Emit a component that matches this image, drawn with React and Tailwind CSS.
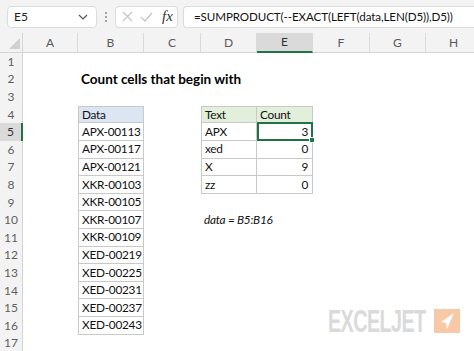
import React from "react";

const COLS = ["A", "B", "C", "D", "E", "F", "G", "H"];

const DATA = [
  "APX-00113",
  "APX-00117",
  "APX-00121",
  "XKR-00103",
  "XKR-00105",
  "XKR-00107",
  "XKR-00109",
  "XED-00219",
  "XED-00225",
  "XED-00231",
  "XED-00237",
  "XED-00243",
];

const COUNTS = [
  ["APX", 3],
  ["xed", 0],
  ["X", 9],
  ["zz", 0],
];

function FormulaBar() {
  return (
    <div className="h-[33px] bg-[#f3f3f3] flex items-center pl-[7px] pr-0">
      <div className="w-[90px] h-[22px] bg-white border border-[#dcdcdc] rounded-[4px] flex items-center justify-between px-[6px] text-[12px] text-[#222]">
        <span>E5</span>
        <svg width="10" height="6" viewBox="0 0 10 6" className="mr-[2px]">
          <path d="M1 1 L5 5 L9 1" fill="none" stroke="#555" strokeWidth="1.2" />
        </svg>
      </div>
      <div className="w-[18px] flex flex-col items-center gap-[2px]">
        <span className="w-[2px] h-[2px] bg-[#888] rounded-full" />
        <span className="w-[2px] h-[2px] bg-[#888] rounded-full" />
        <span className="w-[2px] h-[2px] bg-[#888] rounded-full" />
      </div>
      <div className="w-[63px] h-[22px] bg-white border border-[#dcdcdc] rounded-[4px] flex items-center gap-[7px] pl-[6px]">
        <svg width="11" height="11" viewBox="0 0 11 11">
          <path d="M1 1 L10 10 M10 1 L1 10" stroke="#c4c4c4" strokeWidth="1.2" />
        </svg>
        <svg width="13" height="10" viewBox="0 0 13 10">
          <path d="M1 5 L5 9 L12 1" fill="none" stroke="#c4c4c4" strokeWidth="1.2" />
        </svg>
        <span className="font-['Liberation_Serif'] italic text-[15px] leading-none text-[#333] ml-[2px]">
          fx
        </span>
      </div>
      <div className="ml-[5px] flex-1 h-[22px] bg-white border border-r-0 border-[#dcdcdc] rounded-l-[4px] flex items-center pl-[10px] text-[11.6px] tracking-[-0.1px] text-[#111] whitespace-nowrap overflow-hidden">
        =SUMPRODUCT(--EXACT(LEFT(data,LEN(D5)),D5))
      </div>
    </div>
  );
}

function Cell({ className = "", children }) {
  return <div className={`flex items-center overflow-visible whitespace-nowrap ${className}`}>{children}</div>;
}

export default function App() {
  const cells = [];

  // header row
  cells.push(
    <div key="corner" className="relative bg-[#f3f3f3] border-r border-b border-[#d4d4d4]">
      <svg width="11" height="11" viewBox="0 0 11 11" className="absolute right-[2px] bottom-[3px]">
        <path d="M11 0 L11 11 L0 11 Z" fill="#d0d0d0" />
      </svg>
    </div>
  );
  COLS.forEach((c) => {
    const sel = c === "E";
    cells.push(
      <div
        key={"h" + c}
        className={`flex items-center justify-center text-[12px] border-r border-[#dadada] ${
          sel ? "bg-[#dadada] text-[#333] border-b-2 border-b-[#217346]" : "bg-[#f3f3f3] text-[#5a5a5a] border-b border-b-[#d4d4d4]"
        }`}
      >
        {c}
      </div>
    );
  });

  for (let r = 1; r <= 17; r++) {
    const sel = r === 5;
    cells.push(
      <div
        key={"r" + r}
        className={`flex items-center justify-center text-[12px] ${
          sel ? "bg-[#dadada] text-[#333] border-r-2 border-[#217346]" : "bg-[#f3f3f3] text-[#5f5f5f] border-r border-[#d4d4d4]"
        }`}
      >
        {r}
      </div>
    );
    COLS.forEach((c) => {
      const key = c + r;
      let content = null;
      let cls = "";
      if (c === "B" && r === 2) {
        content = <span className="font-bold text-[13.5px] tracking-[0px] text-black">Count cells that begin with</span>;
        cls = "pl-[3px]";
      } else if (c === "B" && r === 4) {
        content = "Data";
        cls = "pl-[3px] bg-[#dce6f2] border border-[#c9c9c9]";
      } else if (c === "B" && r >= 5 && r <= 16) {
        content = DATA[r - 5];
        cls = "pl-[3px] border-x border-b border-[#c9c9c9]";
      } else if (c === "D" && r === 4) {
        content = "Text";
        cls = "pl-[3px] bg-[#e2efda] border border-[#c9c9c9]";
      } else if (c === "E" && r === 4) {
        content = "Count";
        cls = "pl-[3px] bg-[#e2efda] border-y border-r border-[#c9c9c9]";
      } else if (c === "D" && r >= 5 && r <= 8) {
        content = COUNTS[r - 5][0];
        cls = "pl-[3px] border-x border-b border-[#c9c9c9]";
      } else if (c === "E" && r >= 5 && r <= 8) {
        content = COUNTS[r - 5][1];
        cls =
          r === 5
            ? "relative justify-end pr-[3px] border-2 border-[#217346] -mt-px"
            : "justify-end pr-[4px] border-r border-b border-[#c9c9c9]";
      } else if (c === "D" && r === 10) {
        content = <span className="italic">data = B5:B16</span>;
        cls = "pl-[3px]";
      }
      cells.push(
        <Cell key={key} className={`text-[11.8px] tracking-[-0.25px] text-[#111] ${cls}`}>
          {content}
          {c === "E" && r === 5 && (
            <span className="absolute -right-[4px] -bottom-[4px] w-[6px] h-[6px] bg-[#217346] border border-white" />
          )}
        </Cell>
      );
    });
  }

  return (
    <div className="w-[474px] h-[351px] overflow-hidden bg-white relative font-['Lato',sans-serif]">
      <FormulaBar />
      <div className="grid grid-cols-[23px_55px_66px_57px_56px_56px_57px_56px_56px] grid-rows-[20px_repeat(17,17.6px)]">
        {cells}
      </div>
      <div className="absolute left-[328px] top-[305px] flex items-center gap-[4px]">
        <span className="font-['Liberation_Sans'] font-bold text-[32px] leading-none tracking-[-1px] text-[#dadada] inline-block origin-left scale-x-[0.62] w-[100px]">
          EXCELJET
        </span>
        <svg width="26" height="24" viewBox="0 0 26 24" className="ml-[2px]">
          <rect x="0" y="0" width="26" height="24" fill="#f7c9a6" />
          <path d="M20 4 L7 13 L12 14 L13 20 Z" fill="#ffffff" />
        </svg>
      </div>
    </div>
  );
}
